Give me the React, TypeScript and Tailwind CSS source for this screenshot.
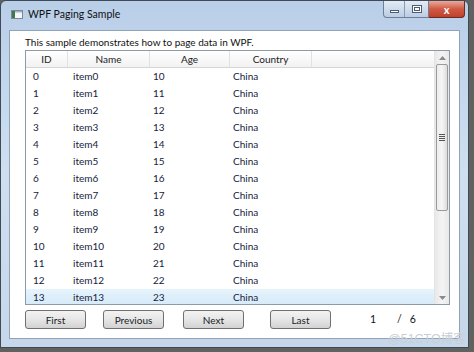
import React from "react";

const rows = Array.from({ length: 14 }, (_, i) => ({
  id: i,
  name: `item${i}`,
  age: 10 + i,
  country: "China",
}));

const font = { fontFamily: 'Lato, "Open Sans", sans-serif' };

function TitleIcon() {
  return (
    <svg width="12" height="9" viewBox="0 0 12 9">
      <rect x="0.5" y="0.5" width="11" height="8" fill="#f4f6f8" stroke="#7b8896" />
      <rect x="1" y="1" width="3" height="7" fill="#3f7a4c" />
      <rect x="4" y="1" width="7" height="1.5" fill="#9fb3c8" />
    </svg>
  );
}

function CaptionButtons() {
  return (
    <div className="flex items-start">
      <div className="flex h-[17px] overflow-hidden rounded-bl-[4px] border border-t-0 border-[#6f7f93] bg-gradient-to-b from-[#e3ecf6] to-[#bccde2]">
        <div className="flex w-[21px] items-center justify-center border-r border-[#8a9bb0]">
          <div className="mt-[5px] h-[3px] w-[9px] border border-[#4d5d71] bg-white" />
        </div>
        <div className="flex w-[23px] items-center justify-center">
          <div className="h-[8px] w-[10px] border border-[#4d5d71] bg-white p-[1px]">
            <div className="h-full w-full border border-[#4d5d71]" />
          </div>
        </div>
      </div>
      <div className="flex h-[17px] w-[36px] items-center justify-center rounded-br-[4px] border border-t-0 border-l-0 border-[#6b2a22] bg-gradient-to-b from-[#e9a99c] via-[#cf5a44] to-[#c0402a]">
        <span className="text-[11px] leading-none font-bold text-white">x</span>
      </div>
    </div>
  );
}

function Scrollbar() {
  return (
    <div className="flex w-[15px] shrink-0 flex-col border-l border-[#e4e4e4] bg-gradient-to-r from-[#e8e8e8] via-[#f4f4f4] to-[#e8e8e8]">
      <div className="flex h-[13px] items-center justify-center">
        <svg width="7" height="4" viewBox="0 0 7 4">
          <path d="M0 4 L3.5 0 L7 4 Z" fill="#8a8a8a" />
        </svg>
      </div>
      <div className="mx-[1px] flex h-[147px] items-center justify-center rounded-[2px] border border-[#9a9a9a] bg-gradient-to-r from-[#ececec] via-[#f6f6f6] to-[#dcdcdc]">
        <div className="flex flex-col gap-[1px]">
          <div className="h-[1px] w-[6px] bg-[#555]" />
          <div className="h-[1px] w-[6px] bg-[#555]" />
          <div className="h-[1px] w-[6px] bg-[#555]" />
          <div className="h-[1px] w-[6px] bg-[#555]" />
        </div>
      </div>
      <div className="flex-1" />
      <div className="flex h-[13px] items-center justify-center">
        <svg width="7" height="4" viewBox="0 0 7 4">
          <path d="M0 0 L3.5 4 L7 0 Z" fill="#8a8a8a" />
        </svg>
      </div>
    </div>
  );
}

function PagerButton({ label, className }: { label: string; className?: string }) {
  return (
    <button
      type="button"
      className={`h-[19px] w-[61px] rounded-[3px] border border-[#707070] bg-gradient-to-b from-[#f3f3f3] via-[#e6e6e6] to-[#d2d2d2] text-[10px] leading-none text-[#1b1b1b] ${className ?? ""}`}
    >
      {label}
    </button>
  );
}

export default function App() {
  return (
    <div className="relative h-[352px] w-[474px] overflow-hidden bg-[#5f625e]" style={font}>
      <div className="flex h-[348px] w-[469px] flex-col rounded-t-[6px] border border-[#3f4a56] bg-gradient-to-b from-[#b9cfe8] via-[#cfdff0] to-[#c6d7ea]">
        <div className="flex h-[29px] shrink-0 items-start justify-between pr-[3px]">
          <div className="flex items-center gap-[5px] pt-[7px] pl-[10px]">
            <TitleIcon />
            <span className="text-[10.5px] leading-[13px] text-[#111]">WPF Paging Sample</span>
          </div>
          <CaptionButtons />
        </div>

        <div className="mx-[8px] mb-[8px] flex flex-1 flex-col border border-[#8fa3ba] bg-white pl-[15px] pr-[9px]">
          <p className="mt-[4px] h-[15px] text-[10px] leading-[15px] text-[#111]">
            This sample demonstrates how to page data in WPF.
          </p>

          <div className="flex h-[255px] overflow-hidden border border-[#8e9aa6] text-[10px]">
            <div className="flex min-w-0 flex-1 flex-col">
              <div className="flex h-[17px] shrink-0 border-b border-[#d5d5d5] bg-gradient-to-b from-white to-[#f2f2f2] text-[#1b1b1b]">
                <div className="flex w-[42px] items-center justify-center border-r border-[#e2e2e2]">ID</div>
                <div className="flex w-[82px] items-center justify-center border-r border-[#e2e2e2]">Name</div>
                <div className="flex w-[80px] items-center justify-center border-r border-[#e2e2e2]">Age</div>
                <div className="flex w-[82px] items-center justify-center border-r border-[#e2e2e2]">Country</div>
                <div className="flex-1" />
              </div>
              {rows.map((r) => (
                <div
                  key={r.id}
                  className={`flex h-[17px] shrink-0 items-center text-[#17223d] ${
                    r.id === 13 ? "bg-gradient-to-b from-[#e6f3fc] to-[#d5eaf8]" : ""
                  }`}
                >
                  <div className="w-[42px] pl-[7px]">{r.id}</div>
                  <div className="w-[82px] pl-[5px]">{r.name}</div>
                  <div className="w-[80px] pl-[3px]">{r.age}</div>
                  <div className="w-[82px] pl-[3px]">{r.country}</div>
                </div>
              ))}
            </div>
            <Scrollbar />
          </div>

          <div className="mt-[5px] flex items-center text-[10.5px] text-[#111]">
            <PagerButton label="First" />
            <PagerButton label="Previous" className="ml-[17px]" />
            <PagerButton label="Next" className="ml-[19px]" />
            <PagerButton label="Last" className="ml-[26px]" />
            <span className="ml-[39px]">1</span>
            <span className="ml-[21px]">/</span>
            <span className="ml-[8px]">6</span>
          </div>
        </div>
      </div>

      <span
        className="absolute top-[333px] left-[388px] text-[12.5px] leading-none text-[#c9cfd6]"
        style={{ fontFamily: '"Liberation Sans", "Noto Sans CJK SC", sans-serif' }}
      >
        @51CTO博客
      </span>
    </div>
  );
}
